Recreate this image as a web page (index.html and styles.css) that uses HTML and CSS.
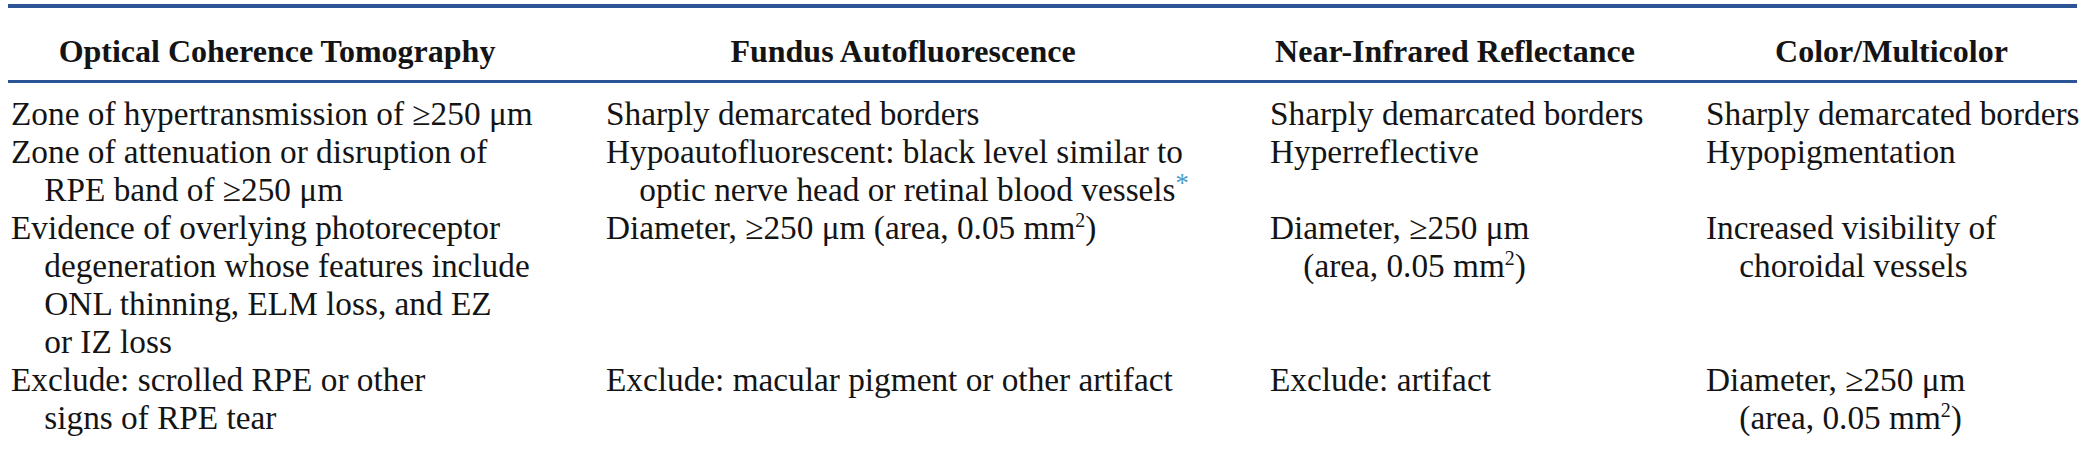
FILE: index.html
```html
<!DOCTYPE html>
<html lang="en">
<head>
<meta charset="utf-8">
<title>Imaging criteria</title>
<link rel="stylesheet" href="styles.css">
</head>
<body>
<table class="criteria">
  <colgroup>
    <col class="c1"><col class="c2"><col class="c3"><col class="c4">
  </colgroup>
  <thead>
    <tr>
      <th>Optical Coherence Tomography</th>
      <th>Fundus Autofluorescence</th>
      <th>Near-Infrared Reflectance</th>
      <th>Color/Multicolor</th>
    </tr>
  </thead>
  <tbody>
    <tr class="first">
      <td><span class="entry">Zone of hypertransmission of &ge;250 &mu;m</span></td>
      <td><span class="entry">Sharply demarcated borders</span></td>
      <td><span class="entry">Sharply demarcated borders</span></td>
      <td><span class="entry">Sharply demarcated borders</span></td>
    </tr>
    <tr>
      <td><span class="entry">Zone of attenuation or disruption of<br>RPE band of &ge;250 &mu;m</span></td>
      <td><span class="entry">Hypoautofluorescent: black level similar to<br>optic nerve head or retinal blood vessels<sup class="note">*</sup></span></td>
      <td><span class="entry">Hyperreflective</span></td>
      <td><span class="entry">Hypopigmentation</span></td>
    </tr>
    <tr>
      <td><span class="entry">Evidence of overlying photoreceptor<br>degeneration whose features include<br>ONL thinning, ELM loss, and EZ<br>or IZ loss</span></td>
      <td><span class="entry">Diameter, &ge;250 &mu;m (area, 0.05 mm<sup>2</sup>)</span></td>
      <td><span class="entry">Diameter, &ge;250 &mu;m<br>(area, 0.05 mm<sup>2</sup>)</span></td>
      <td><span class="entry">Increased visibility of<br>choroidal vessels</span></td>
    </tr>
    <tr>
      <td><span class="entry">Exclude: scrolled RPE or other<br>signs of RPE tear</span></td>
      <td><span class="entry">Exclude: macular pigment or other artifact</span></td>
      <td><span class="entry">Exclude: artifact</span></td>
      <td><span class="entry">Diameter, &ge;250 &mu;m<br>(area, 0.05 mm<sup>2</sup>)</span></td>
    </tr>
  </tbody>
</table>
</body>
</html>
```

FILE: styles.css
```css
html, body {
  margin: 0;
  padding: 0;
  background: #ffffff;
}

body {
  padding: 4px 0 0 8px;
  font-family: "Liberation Serif", "Times New Roman", serif;
  color: #141414;
}

.criteria {
  width: 2069px;
  table-layout: fixed;
  border-collapse: collapse;
  border-top: 4px solid #2b5595;
}

.c1 { width: 595px; }
.c2 { width: 664px; }
.c3 { width: 436px; }
.c4 { width: 374px; }

.criteria th,
.criteria td {
  padding-left: 3px;
  white-space: nowrap;
}

.criteria th:nth-child(1),
.criteria td:nth-child(1) { padding-right: 60px; }
.criteria th:nth-child(2),
.criteria td:nth-child(2) { padding-right: 67px; }
.criteria th:nth-child(3),
.criteria td:nth-child(3) { padding-right: 63px; }
.criteria th:nth-child(4),
.criteria td:nth-child(4) { padding-right: 0; }

.criteria th {
  font-size: 32px;
  line-height: 36px;
  font-weight: bold;
  text-align: center;
  padding-top: 25px;
  padding-bottom: 11px;
  border-bottom: 3px solid #2b5595;
}

.criteria td {
  font-size: 33.3px;
  line-height: 38px;
  vertical-align: top;
  padding-top: 0;
  padding-bottom: 0;
}

.criteria tr.first td {
  padding-top: 12px;
}

.entry {
  display: block;
  padding-left: 1em;
  text-indent: -1em;
}

.criteria sup {
  font-size: 0.6em;
  line-height: 0;
  vertical-align: 0.6em;
}

.criteria sup.note {
  color: #4c9acb;
  font-size: 0.8em;
  vertical-align: 0.35em;
}
```
